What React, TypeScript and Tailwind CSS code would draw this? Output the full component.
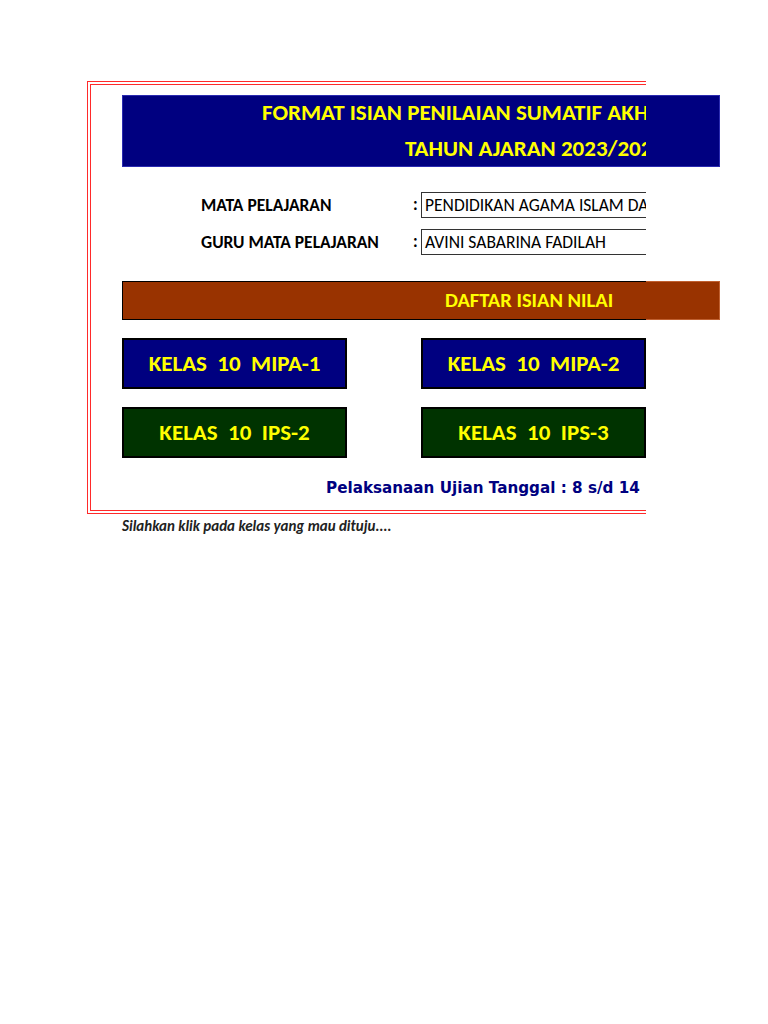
import React from "react";

const cal = { fontFamily: "Carlito, Lato, 'Open Sans', sans-serif" } as React.CSSProperties;

function ClassButton({ label, color }: { label: string; color: "blue" | "green" }) {
  return (
    <div
      className={
        "w-[225px] h-[51px] border-2 border-black flex items-center justify-center whitespace-pre text-[23px] font-bold text-[#ffff00] " +
        (color === "blue" ? "bg-[#000080]" : "bg-[#003300]")
      }
    >
      {label}
    </div>
  );
}

export default function App() {
  return (
    <div className="w-[768px] h-[1024px] bg-white relative" style={cal}>
      <div className="pt-[81px] pl-[87px]">
        {/* outer red line */}
        <div className="w-[559px] border-l border-t border-b border-[#ff2a2a] pl-[2px] pt-[2px] pb-[2px]">
          {/* inner red line */}
          <div className="border-l border-t border-b border-[#ff2a2a] pl-[31px] pt-[10px] pb-[10px]">
            {/* header */}
            <div className="w-[598px] h-[72px] bg-[#000080] border border-[#2b2bb0]">
              <div className="w-[523px] h-full overflow-hidden whitespace-nowrap text-[#ffff00] font-bold text-[23px]">
                <div className="pl-[139px] leading-[32px]">FORMAT ISIAN PENILAIAN SUMATIF AKHIR</div>
                <div className="pl-[282px] leading-[40px]">TAHUN AJARAN 2023/2024</div>
              </div>
            </div>

            {/* fields */}
            <div className="mt-[25px] flex flex-col gap-[11px]">
              <div className="flex items-center h-[26px]">
                <div className="ml-[79px] w-[212px] font-bold text-[17.5px] text-black">MATA PELAJARAN</div>
                <div className="w-[8px] font-bold text-[17px] text-black">:</div>
                <div className="w-[225px] h-[26px] border-l border-t border-b border-[#333] pl-[3px] text-[17.5px] leading-[24px] text-black whitespace-nowrap overflow-hidden">
                  PENDIDIKAN AGAMA ISLAM DAN BUDI PEKERTI
                </div>
              </div>
              <div className="flex items-center h-[26px]">
                <div className="ml-[79px] w-[212px] font-bold text-[17.5px] text-black">GURU MATA PELAJARAN</div>
                <div className="w-[8px] font-bold text-[17px] text-black">:</div>
                <div className="w-[225px] h-[26px] border-l border-t border-b border-[#333] pl-[3px] text-[17.5px] leading-[24px] text-black whitespace-nowrap overflow-hidden">
                  AVINI SABARINA FADILAH
                </div>
              </div>
            </div>

            {/* brown bar */}
            <div className="mt-[26px] w-[598px] h-[39px] bg-[#993300] border border-[#c06030] flex">
              <div className="w-[524px] border-t border-b border-l border-black -m-[1px] h-[39px] overflow-hidden whitespace-nowrap flex items-center">
                <div className="pl-[322px] font-bold text-[20.5px] text-[#ffff00]">DAFTAR ISIAN NILAI</div>
              </div>
            </div>

            {/* class buttons */}
            <div className="mt-[18px] flex flex-col gap-[18px]">
              <div className="flex gap-[74px]">
                <ClassButton label="KELAS  10  MIPA-1" color="blue" />
                <ClassButton label="KELAS  10  MIPA-2" color="blue" />
              </div>
              <div className="flex gap-[74px]">
                <ClassButton label="KELAS  10  IPS-2" color="green" />
                <ClassButton label="KELAS  10  IPS-3" color="green" />
              </div>
            </div>

            {/* date */}
            <div
              className="mt-[18px] w-[524px] overflow-hidden whitespace-nowrap h-[24px] leading-[24px] text-[15.2px] font-bold text-[#000080]"
              style={{ fontFamily: "'Comic Sans MS', 'DejaVu Sans', sans-serif" }}
            >
              <span className="pl-[204px]">Pelaksanaan Ujian Tanggal : 8 s/d 14</span>
            </div>
          </div>
        </div>
        <div className="pl-[35px] mt-[3px] text-[15px] leading-[18px] font-bold italic text-[#222]">
          Silahkan klik pada kelas yang mau dituju....
        </div>
      </div>
    </div>
  );
}
